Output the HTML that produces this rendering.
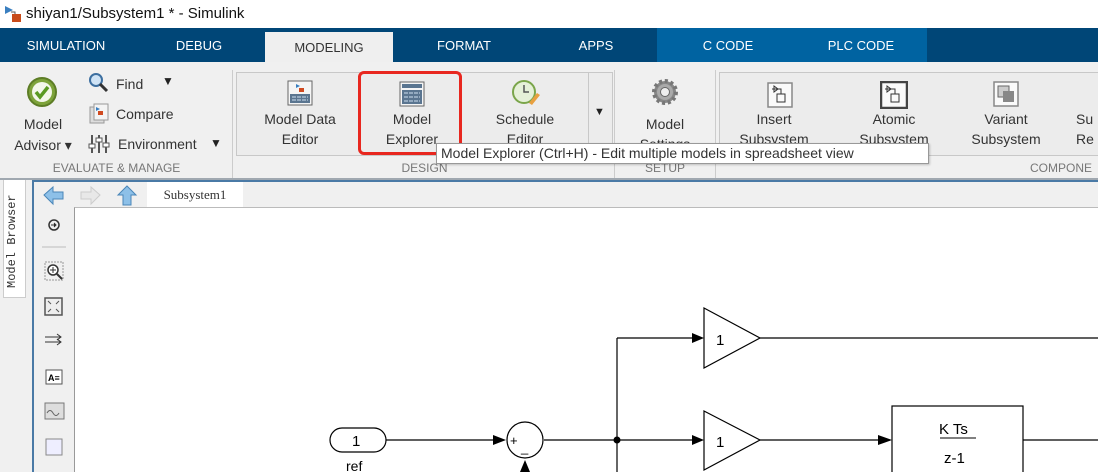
<!DOCTYPE html>
<html><head><meta charset="utf-8"><style>
*{margin:0;padding:0;box-sizing:border-box}
body{width:1098px;height:472px;overflow:hidden;background:#f0f0f0;font-family:"Liberation Sans",sans-serif;position:relative;color:#222}
.a{position:absolute}
.tab{position:absolute;top:28px;height:34px;line-height:36px;font-size:13px;color:#fff;text-align:center}
.lbl{position:absolute;font-size:14px;text-align:center;line-height:20px;color:#333}
.grp{position:absolute;top:161px;font-size:12px;color:#777;text-align:center}
</style></head><body>
<div class="a" style="left:0;top:0;width:1098px;height:28px;background:#fff"></div>
<svg class="a" style="left:3px;top:4px" width="20" height="20"><path d="M2 2 L10 6 L2 10Z" fill="#3a7fc0"/><path d="M8 8 h4 v4" stroke="#555" fill="none"/><rect x="9" y="10" width="9" height="8" fill="#c84b1a"/></svg>
<div class="a" style="left:26px;top:5px;font-size:15px;color:#111">shiyan1/Subsystem1 * - Simulink</div>
<div class="a" style="left:0;top:28px;width:1098px;height:34px;background:#004677"></div>
<div class="a" style="left:657px;top:28px;width:270px;height:34px;background:#0063a1"></div>
<div class="a" style="left:265px;top:32px;width:128px;height:30px;background:#efefef"></div>
<div class="tab" style="left:12px;width:108px">SIMULATION</div>
<div class="tab" style="left:160px;width:78px">DEBUG</div>
<div class="tab" style="left:265px;width:128px;color:#333;top:30px">MODELING</div>
<div class="tab" style="left:420px;width:88px">FORMAT</div>
<div class="tab" style="left:560px;width:72px">APPS</div>
<div class="tab" style="left:690px;width:76px">C CODE</div>
<div class="tab" style="left:815px;width:92px">PLC CODE</div>

<!-- Evaluate & manage -->
<svg class="a" style="left:26px;top:76px" width="34" height="34"><circle cx="16" cy="16" r="14" fill="#7da33a" stroke="#5d7d26" stroke-width="2"/><circle cx="16" cy="16" r="10" fill="#f3f7ea"/><path d="M10 16 l4 5 l8 -10" stroke="#5a9a22" stroke-width="3.5" fill="none"/></svg>
<div class="lbl" style="left:10px;top:114px;width:66px;line-height:21px">Model<br>Advisor ▾</div>
<svg class="a" style="left:88px;top:72px" width="22" height="22"><circle cx="8" cy="8" r="6" fill="#cfe3f5" stroke="#3d6fa0" stroke-width="2"/><path d="M12 12 l7 7" stroke="#333" stroke-width="3"/></svg>
<div class="lbl" style="left:116px;top:74px">Find</div><div class="a" style="left:162px;top:74px;font-size:12px">▼</div>
<svg class="a" style="left:89px;top:103px" width="22" height="22"><rect x="1" y="4" width="14" height="16" fill="#ddd" stroke="#999"/><rect x="5" y="1" width="14" height="16" fill="#f4f4f4" stroke="#999"/><rect x="9" y="8" width="5" height="4" fill="#d04a20"/><path d="M7 4 l4 2 l-4 2z" fill="#3a7fc0"/></svg>
<div class="lbl" style="left:116px;top:104px">Compare</div>
<svg class="a" style="left:88px;top:133px" width="22" height="22"><g stroke="#555" stroke-width="2"><path d="M4 2v18M11 2v18M18 2v18"/></g><g fill="#fff" stroke="#555"><rect x="1" y="11" width="6" height="4"/><rect x="8" y="5" width="6" height="4"/><rect x="15" y="10" width="6" height="4"/></g></svg>
<div class="lbl" style="left:118px;top:134px">Environment</div><div class="a" style="left:210px;top:136px;font-size:12px">▼</div>
<div class="grp" style="left:0;width:233px">EVALUATE &amp; MANAGE</div>
<div class="a" style="left:232px;top:70px;width:1px;height:108px;background:#ccc"></div>

<!-- Design -->
<div class="a" style="left:236px;top:72px;width:377px;height:84px;border:1px solid #c8c8c8;background:#ececec"></div>
<div class="a" style="left:588px;top:72px;width:1px;height:84px;background:#c8c8c8"></div>
<div class="a" style="left:594px;top:106px;font-size:11px">▼</div>
<svg class="a" style="left:287px;top:80px" width="26" height="26"><rect x="1" y="1" width="24" height="24" fill="#f5f5f5" stroke="#666"/><path d="M9 4 l4 2 l-4 2z" fill="#3a7fc0"/><rect x="12" y="8" width="5" height="4" fill="#d04a20"/><rect x="3" y="14" width="20" height="9" fill="#5a7590"/><path d="M5 17h16M5 20h16" stroke="#cfe0ef" stroke-dasharray="4 1"/></svg>
<div class="lbl" style="left:252px;top:109px;width:96px">Model Data<br>Editor</div>
<svg class="a" style="left:399px;top:81px" width="26" height="26"><rect x="1" y="1" width="24" height="24" fill="#f5f5f5" stroke="#666"/><rect x="3" y="3" width="20" height="4" fill="#5a7590"/><rect x="3" y="9" width="20" height="14" fill="#5a7590"/><path d="M5 12h16M5 16h16M5 20h16" stroke="#cfe0ef" stroke-dasharray="4 1"/></svg>
<div class="lbl" style="left:365px;top:109px;width:94px">Model<br>Explorer</div>
<div class="a" style="left:358px;top:71px;width:104px;height:84px;border:3px solid #e8271f;border-radius:6px"></div>
<svg class="a" style="left:511px;top:79px" width="30" height="28"><circle cx="13" cy="13" r="11" fill="#e5f0d8" stroke="#7aa54a" stroke-width="2"/><path d="M13 6v7h5" stroke="#555" stroke-width="1.5" fill="none"/><path d="M18 24 l8 -10 l3 2 l-8 10z" fill="#e8a040"/></svg>
<div class="lbl" style="left:478px;top:109px;width:94px;height:35px;overflow:hidden">Schedule<br>Editor</div>
<div class="grp" style="left:236px;width:377px">DESIGN</div>
<div class="a" style="left:614px;top:70px;width:1px;height:108px;background:#ccc"></div>

<!-- Setup -->
<svg class="a" style="left:651px;top:78px" width="28" height="28"><circle cx="14" cy="14" r="11" fill="#888" stroke="#777" stroke-width="4" stroke-dasharray="3 2.7"/><circle cx="14" cy="14" r="8" fill="#aaa"/><circle cx="14" cy="14" r="4.5" fill="#eee" stroke="#666"/></svg>
<div class="lbl" style="left:625px;top:114px;width:80px;height:30px;overflow:hidden">Model<br>Settings</div>
<div class="grp" style="left:614px;width:102px">SETUP</div>
<div class="a" style="left:715px;top:70px;width:1px;height:108px;background:#ccc"></div>

<!-- Component -->
<div class="a" style="left:719px;top:72px;width:390px;height:84px;border:1px solid #c8c8c8;background:#ececec"></div>
<svg class="a" style="left:767px;top:82px" width="26" height="26"><rect x="1" y="1" width="24" height="24" fill="#fafafa" stroke="#888" stroke-width="1.5"/><path d="M5 7h6M7 4l4 3-4 3z" stroke="#333" fill="none"/><path d="M11 7h3v5" stroke="#333" fill="none"/><rect x="10" y="12" width="8" height="8" fill="none" stroke="#333"/></svg>
<div class="lbl" style="left:724px;top:109px;width:100px;height:34px;overflow:hidden">Insert<br>Subsystem</div>
<svg class="a" style="left:880px;top:81px" width="28" height="28"><rect x="1" y="1" width="26" height="26" fill="#fafafa" stroke="#444" stroke-width="2.5"/><path d="M5 8h6M7 5l4 3-4 3z" stroke="#333" fill="none"/><path d="M11 8h4v5" stroke="#333" fill="none"/><rect x="11" y="13" width="8" height="8" fill="none" stroke="#333"/></svg>
<div class="lbl" style="left:844px;top:109px;width:100px;height:34px;overflow:hidden">Atomic<br>Subsystem</div>
<svg class="a" style="left:993px;top:81px" width="26" height="26"><rect x="1" y="1" width="24" height="24" fill="#fafafa" stroke="#888" stroke-width="1.5"/><rect x="5" y="5" width="11" height="11" fill="#ccc" stroke="#666"/><rect x="10" y="10" width="11" height="11" fill="#888"/></svg>
<div class="lbl" style="left:956px;top:109px;width:100px">Variant<br>Subsystem</div>
<div class="lbl" style="left:1076px;top:109px;width:40px;text-align:left">Su<br>Re</div>
<div class="grp" style="left:1030px;width:100px;text-align:left">COMPONE</div>

<!-- tooltip -->
<div class="a" style="left:436px;top:143px;width:493px;height:21px;background:#fff;border:1px solid #999;font-size:14px;line-height:19px;padding-left:4px;color:#333;box-shadow:1px 1px 2px rgba(0,0,0,.2)">Model Explorer (Ctrl+H) - Edit multiple models in spreadsheet view</div>

<!-- lower area -->
<div class="a" style="left:0;top:178px;width:1098px;height:2px;background:#a0a8b0"></div>
<div class="a" style="left:3px;top:180px;width:23px;height:118px;background:#fff;border:1px solid #ccc;border-top:none"></div>
<div class="a" style="left:5px;top:288px;transform:rotate(-90deg);transform-origin:0 0;font-family:'Liberation Mono',monospace;font-size:12px;white-space:nowrap;color:#333">Model Browser</div>
<div class="a" style="left:32px;top:180px;width:1066px;height:292px;border-left:2px solid #4a7aa6;border-top:2px solid #4a7aa6;background:#f0f0f0"></div>
<svg class="a" style="left:42px;top:185px" width="100" height="22"><path d="M2 10 l9 -8 v5 h10 v7 h-10 v5z" fill="#8dc0e8" stroke="#4a86b8"/><path d="M58 10 l-9 -8 v5 h-10 v7 h10 v5z" fill="#e8e8e8" stroke="#ccc"/><path d="M85 1 l9 9 h-5 v10 h-8 v-10 h-5z" fill="#8dc0e8" stroke="#4a86b8"/></svg>
<div class="a" style="left:147px;top:182px;width:96px;height:25px;background:#fff;font-family:'Liberation Serif',serif;font-size:13px;line-height:26px;text-align:center;color:#333">Subsystem1</div>
<div class="a" style="left:74px;top:207px;width:1024px;height:265px;background:#fff;border-left:1px solid #999;border-top:1px solid #bbb"></div>
<!-- left toolbar -->
<svg class="a" style="left:40px;top:212px" width="30" height="260">
<circle cx="14" cy="13" r="5" fill="#eee" stroke="#333" stroke-width="1.5"/><path d="M11 13h5M14 11l2 2-2 2" stroke="#333"/>
<path d="M2 35h24" stroke="#bbb"/>
<rect x="5" y="50" width="18" height="18" fill="none" stroke="#999" stroke-dasharray="2 1"/><circle cx="13" cy="58" r="5" fill="#fff" stroke="#333" stroke-width="1.5"/><path d="M10 58h6M13 55v6" stroke="#333"/><path d="M17 62l5 5" stroke="#333" stroke-width="2"/>
<rect x="5" y="86" width="17" height="17" fill="#eee" stroke="#555" stroke-width="1.5"/><path d="M8 89l3 3M19 89l-3 3M8 100l3-3M19 100l-3-3" stroke="#555"/>
<path d="M5 125h16M5 130h16M17 122l4 3-4 3M17 127l4 3-4 3" stroke="#333" fill="none"/>
<rect x="6" y="158" width="16" height="14" fill="#fff" stroke="#555"/><text x="8" y="169" font-size="9" font-weight="bold" font-family="Liberation Sans">A≡</text>
<rect x="5" y="191" width="19" height="16" fill="#ddd" stroke="#777"/><path d="M7 201 q3 -5 6 0 t6 0" stroke="#666" fill="none"/>
<rect x="6" y="227" width="16" height="16" fill="#eef" stroke="#888"/>
</svg>
<!-- diagram -->
<svg class="a" style="left:0;top:0" width="1098" height="472">
<g stroke="#000" stroke-width="1.2" fill="none">
<path d="M386 440H493M544 440H692M617 338V472M617 338H692M760 338H1098M760 440H878M1023 440H1098M525 472V466"/>
<path d="M704 308L760 338L704 368Z" fill="#fff"/>
<path d="M704 411L760 440L704 470Z" fill="#fff"/>
<rect x="892" y="406" width="131" height="80" fill="#fff"/>
<rect x="330" y="428" width="56" height="24" rx="12" fill="#fff"/>
<ellipse cx="525" cy="440" rx="18" ry="18" fill="#fff"/>
<path d="M940 438h36" stroke-width="1"/>
</g>
<g fill="#000"><path d="M692 333l12 5-12 5z"/><path d="M692 435l12 5-12 5z"/><path d="M878 435l14 5-14 5z"/><path d="M493 435l13 5-13 5z"/><path d="M520 472l5 -12 5 12z"/><circle cx="617" cy="440" r="3.5"/></g>
<g font-family="Liberation Sans" font-size="15" fill="#000"><text x="716" y="345">1</text><text x="716" y="447">1</text><text x="352" y="446">1</text><text x="939" y="434">K Ts</text><text x="944" y="463">z-1</text><text x="346" y="471" font-size="14">ref</text><text x="510" y="445" font-size="13">+</text><text x="521" y="452" font-size="13">_</text></g>
</svg>
</body></html>
